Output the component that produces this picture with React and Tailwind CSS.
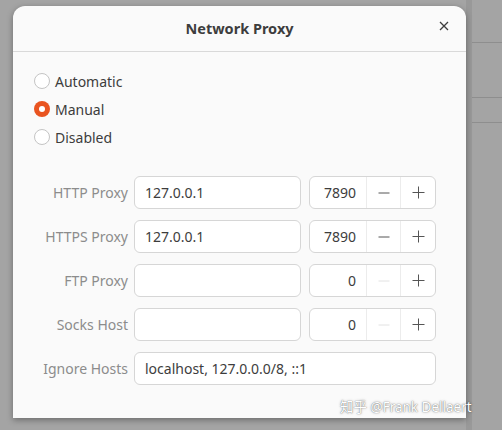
import { useState } from "react";

const font = { fontFamily: '"Noto Sans", "Open Sans", sans-serif' };

function Radio({ label, checked, onClick }) {
    return (
        <button onClick={onClick} className="flex items-center h-[28px] gap-[5px] text-[14px] text-[#3d3d3d]">
            {checked ? (
                <span className="w-[16px] h-[16px] rounded-full bg-[#e95420] flex items-center justify-center">
                    <span className="w-[6px] h-[6px] rounded-full bg-white"></span>
                </span>
            ) : (
                <span className="w-[16px] h-[16px] rounded-full border border-[#c4c4c4] bg-white"></span>
            )}
            <span>{label}</span>
        </button>
    )
}

function Spin({ value }) {
    const zero = value === 0;
    return (
        <div className="w-[127px] h-[33px] flex border border-[#d6d6d6] rounded-[6px] bg-white text-[14px] text-[#3d3d3d]">
            <div className="flex-1 flex items-center justify-end pr-[10px]">{value}</div>
            <div className={"w-[34px] flex items-center justify-center border-l border-[#ececec] " + (zero ? "text-[#e2e2e2]" : "text-[#555]")}>
                <svg width="12" height="12" viewBox="0 0 12 12"><path d="M0.5 6h11" stroke="currentColor" strokeWidth="1" /></svg>
            </div>
            <div className="w-[35px] flex items-center justify-center border-l border-[#ececec] text-[#555]">
                <svg width="13" height="13" viewBox="0 0 13 13"><path d="M0.5 6.5h12M6.5 0.5v12" stroke="currentColor" strokeWidth="1" /></svg>
            </div>
        </div>
    )
}

function Row({ label, value, port }) {
    return (
        <div className="flex items-center">
            <div className="w-[100px] text-right text-[14px] text-[#8c8c8c] pr-[6px] whitespace-nowrap">{label}</div>
            <div className="w-[167px] h-[33px] border border-[#d6d6d6] rounded-[6px] bg-white flex items-center px-[10px] text-[14px] text-[#3d3d3d]">{value}</div>
            <div className="ml-[8px]"><Spin value={port} /></div>
        </div>
    )
}

export default function App() {
    const [mode, setMode] = useState('manual');

    return (
        <div className="relative w-[502px] h-[430px] overflow-hidden bg-[#a4a4a4]" style={font}>
            <div className="absolute left-[466px] right-0 top-[42px] h-[1px] bg-[#8e8e8e]"></div>
            <div className="absolute left-[466px] right-0 top-[97px] h-[1px] bg-[#8e8e8e]"></div>
            <div className="absolute left-[466px] right-0 top-[122px] h-[1px] bg-[#8e8e8e]"></div>
            <div className="absolute left-[466px] top-0 bottom-0 w-[6px] bg-[#999]"></div>

            <div className="relative ml-[13px] mt-[6px] w-[453px] h-[412px] bg-[#fafafa] rounded-t-[12px] shadow-[0_2px_6px_rgba(0,0,0,0.35)]">
                <div className="relative h-[46px] flex items-center justify-center border-b border-[#d9d9d9]">
                    <span className="text-[14.5px] font-bold text-[#3d3d3d]">Network Proxy</span>
                    <button className="absolute right-[17px] top-[15px] text-[#3d3d3d]">
                        <svg width="10" height="10" viewBox="0 0 10 10"><path d="M1 1l8 8M9 1l-8 8" stroke="currentColor" strokeWidth="1.3" /></svg>
                    </button>
                </div>

                <div className="pl-[21px] pt-[15px]">
                    <div className="flex flex-col items-start">
                        <Radio label="Automatic" checked={mode === 'auto'} onClick={() => setMode('auto')} />
                        <Radio label="Manual" checked={mode === 'manual'} onClick={() => setMode('manual')} />
                        <Radio label="Disabled" checked={mode === 'disabled'} onClick={() => setMode('disabled')} />
                    </div>

                    <div className="mt-[25px] flex flex-col gap-[11px]">
                        <Row label="HTTP Proxy" value="127.0.0.1" port={7890} />
                        <Row label="HTTPS Proxy" value="127.0.0.1" port={7890} />
                        <Row label="FTP Proxy" value="" port={0} />
                        <Row label="Socks Host" value="" port={0} />
                        <div className="flex items-center">
                            <div className="w-[100px] text-right text-[14px] text-[#8c8c8c] pr-[6px] whitespace-nowrap">Ignore Hosts</div>
                            <div className="w-[302px] h-[33px] border border-[#d6d6d6] rounded-[6px] bg-white flex items-center px-[10px] text-[14px] text-[#3d3d3d]">localhost, 127.0.0.0/8, ::1</div>
                        </div>
                    </div>
                </div>
            </div>

            <div className="absolute left-[340px] top-[397px] text-[13.5px] text-white whitespace-nowrap [text-shadow:0_0_1px_rgba(0,0,0,0.6),0_0_3px_rgba(0,0,0,0.3)]" style={{ fontFamily: '"Noto Sans", "Noto Sans CJK SC", sans-serif' }}>
                知乎 @Frank Dellaert
            </div>
        </div>
    )
}
